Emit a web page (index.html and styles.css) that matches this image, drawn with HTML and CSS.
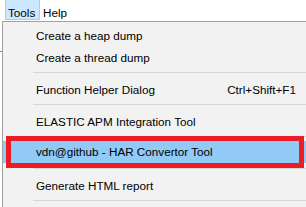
FILE: index.html
```html
<!DOCTYPE html>
<html>
<head>
<meta charset="utf-8">
<link rel="stylesheet" href="styles.css">
</head>
<body>
<div class="screen">
  <div class="menubar">
    <span class="mb-item active">Tools</span>
    <span class="mb-item">Help</span>
  </div>
  <div class="body">
    <div class="gutter"><span class="tick"></span></div>
    <div class="menu">
      <div class="item"><span>Create a heap dump</span></div>
      <div class="item"><span>Create a thread dump</span></div>
      <div class="sep"></div>
      <div class="item"><span>Function Helper Dialog</span><span class="shortcut">Ctrl+Shift+F1</span></div>
      <div class="sep"></div>
      <div class="item"><span>ELASTIC APM Integration Tool</span></div>
      <div class="sep"></div>
      <div class="item hl"><span>vdn@github - HAR Convertor Tool</span><div class="annot"></div></div>
      <div class="sep"></div>
      <div class="item"><span>Generate HTML report</span></div>
      <div class="sep"></div>
    </div>
  </div>
</div>
</body>
</html>
```

FILE: styles.css
```css
* { box-sizing: border-box; }
html, body { margin: 0; padding: 0; }
body {
  width: 306px;
  height: 207px;
  overflow: hidden;
  background: #ffffff;
  font-family: "Liberation Sans", Arial, sans-serif;
  font-size: 11.7px;
  color: #000;
}
.screen { width: 306px; height: 207px; display: flex; flex-direction: column; }
.menubar {
  height: 22px;
  display: flex;
  align-items: flex-start;
  padding-left: 5px;
  background: #fff;
}
.mb-item {
  height: 20px;
  padding: 4px 5px 0 2px;
  line-height: 17px;
  border: 1px solid transparent;
  border-top: none;
}
.mb-item.active {
  background: #cce8ff;
  border-color: #99d1ff;
  width: 35px;
}
.body { flex: 1; display: flex; }
.gutter { width: 2px; }
.tick { display: block; width: 2px; height: 1px; background: #8a8a8a; margin-top: 30px; }
.menu {
  flex: 1;
  background: #f2f2f2;
  border-top: 1px solid #a0a0a0;
  border-left: 1px solid #a0a0a0;
  padding-top: 3px;
}
.item {
  height: 22px;
  display: flex;
  align-items: center;
  justify-content: space-between;
  padding-left: 33px;
  padding-right: 10px;
  line-height: 22px;
  position: relative;
}
.sep {
  height: 10px;
  margin-left: 30px;
  padding-top: 3px;
}
.sep::before {
  content: "";
  display: block;
  height: 1px;
  background: #d7d7d7;
}
.item.hl {
  background: #91c9f7;
  margin-top: -2px;
  margin-bottom: 2px;
}
.annot {
  position: absolute;
  left: 3px;
  top: -5px;
  width: 298px;
  height: 32px;
  border: 5px solid #ed1c24;
}
```
